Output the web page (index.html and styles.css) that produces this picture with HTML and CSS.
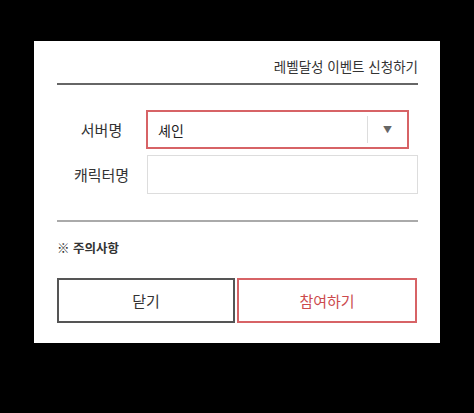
FILE: index.html
```html
<!DOCTYPE html>
<html lang="ko">
<head>
    <meta charset="UTF-8">
    <meta name="viewport" content="width=device-width, initial-scale=1.0">
    <title>레벨달성 이벤트 신청하기</title>
    <link rel="stylesheet" href="styles.css">
</head>
<body>
    <div class="popup">
        <div class="popup-title">레벨달성 이벤트 신청하기</div>

        <div class="form">
            <div class="row">
                <div class="label">서버명</div>
                <div class="select">
                    <span class="select-value">셰인</span>
                    <span class="select-arrow">▼</span>
                </div>
            </div>
            <div class="row">
                <div class="label">캐릭터명</div>
                <div class="input"></div>
            </div>
        </div>

        <div class="notice">※ 주의사항</div>

        <div class="buttons">
            <button class="btn btn-close">닫기</button>
            <button class="btn btn-join">참여하기</button>
        </div>
    </div>
</body>
</html>
```

FILE: styles.css
```css
body {
    margin: 0;
    padding: 0;
    background: #000;
    font-family: "Noto Sans CJK KR", "Noto Sans", sans-serif;
    color: #333;
}
.popup {
    width: 406px;
    height: 302px;
    margin: 41px 0 0 34px;
    padding: 0 22px 0 23px;
    box-sizing: border-box;
    background: #fff;
}
.popup-title {
    padding: 15px 0 7px;
    line-height: 20px;
    font-size: 13.5px;
    text-align: right;
    border-bottom: 2px solid #666;
}
.form {
    padding: 25px 0 26px;
    border-bottom: 2px solid #aaa;
}
.row {
    display: flex;
    align-items: center;
    height: 39px;
}
.row + .row {
    margin-top: 6px;
}
.label {
    width: 89px;
    text-align: center;
    font-size: 15px;
    color: #333;
}
.select {
    width: 263px;
    height: 39px;
    box-sizing: border-box;
    border: 2px solid #d76366;
    display: flex;
    align-items: center;
}
.select-value {
    flex: 1;
    padding-left: 10px;
    font-size: 14px;
    color: #222;
}
.select-arrow {
    width: 39px;
    height: 27px;
    border-left: 1px solid #ddd;
    display: flex;
    align-items: center;
    justify-content: center;
    font-size: 9px;
    color: #666;
}
.input {
    width: 271px;
    height: 39px;
    margin-left: 1px;
    box-sizing: border-box;
    border: 1px solid #ddd;
}
.notice {
    margin-top: 16px;
    line-height: 20px;
    font-size: 12.5px;
    font-weight: 600;
    color: #333;
}
.buttons {
    display: flex;
    gap: 2px;
    margin-top: 20px;
}
.btn {
    height: 45px;
    background: #fff;
    font-family: inherit;
    font-size: 15px;
    cursor: pointer;
}
.btn-close {
    width: 178px;
    border: 2px solid #555;
    color: #333;
}
.btn-join {
    width: 180px;
    border: 2px solid #d76366;
    color: #cc4a4d;
}
```
